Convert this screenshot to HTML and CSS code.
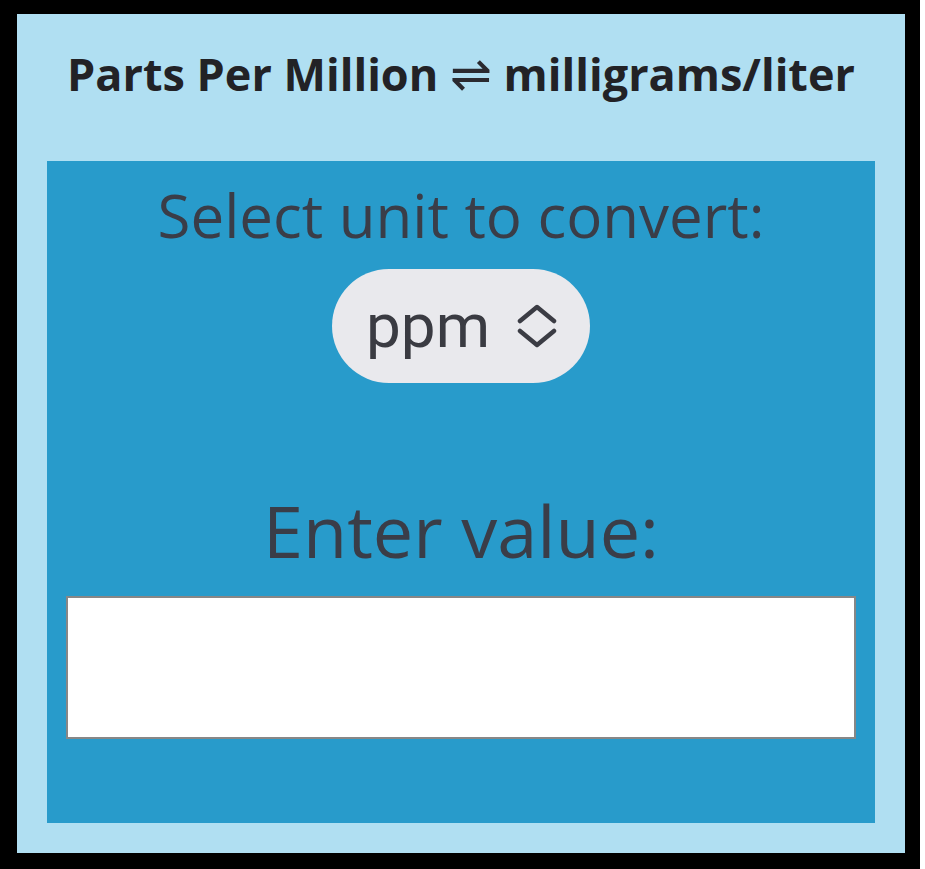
FILE: index.html
```html
<!DOCTYPE html>
<html lang="en">
<head>
    <meta charset="UTF-8">
    <title>PPM to mg/L</title>
    <link rel="stylesheet" href="styles.css">
</head>
<body>
    <div class="frame">
        <div class="panel">
            <h1 class="title">Parts Per Million <span class="arrow">&#8652;</span> milligrams/liter</h1>
            <form class="converter" id="converter">
                <label for="unit" class="label-unit">Select unit to convert:</label>
                <div class="unit-select">
                    <select id="unit" name="unit">
                        <option value="ppm">ppm</option>
                        <option value="mgl">mg/L</option>
                    </select>
                    <svg class="chevrons" width="40" height="44" viewBox="0 0 40 44" aria-hidden="true">
                        <path d="M3 17 L20 3 L37 17 M3 27 L20 41 L37 27" fill="none" stroke="#3b3c44" stroke-width="4.5" stroke-linecap="round" stroke-linejoin="round"/>
                    </svg>
                </div>
                <label for="value" class="label-value">Enter value:</label>
                <input type="text" id="value" name="value">
            </form>
        </div>
    </div>
</body>
</html>
```

FILE: styles.css
```css
body {
    margin: 0;
    padding: 0;
    background-color: #ffffff;
    font-family: "Open Sans", Arial, sans-serif;
}
.frame {
    width: 888px;
    background-color: #000000;
    border-style: solid;
    border-color: #000000;
    border-width: 14px 15px 16px 17px;
}
.panel {
    background-color: #b0dff2;
    padding: 0 30px 30px 30px;
}
.title {
    margin: 0;
    height: 147px;
    padding-top: 30px;
    box-sizing: border-box;
    text-align: center;
    font-size: 45px;
    font-weight: 700;
    line-height: 60px;
    color: #222226;
}
.title .arrow {
    font-family: "DejaVu Sans", sans-serif;
    font-weight: 400;
    font-size: 50px;
    line-height: 40px;
    color: #2a2a30;
}
.converter {
    background-color: #289bcb;
    height: 662px;
    box-sizing: border-box;
    padding: 14px 19px 0 19px;
    display: flex;
    flex-direction: column;
    align-items: center;
}
.label-unit {
    font-size: 60px;
    line-height: 80px;
    color: #3a3d48;
}
.unit-select {
    position: relative;
    margin-top: 14px;
}
.unit-select select {
    appearance: none;
    -webkit-appearance: none;
    width: 258px;
    height: 114px;
    border: none;
    border-radius: 57px;
    background-color: #e9e9ed;
    color: #3a3b42;
    font-family: Roboto, Arial, sans-serif;
    font-size: 62px;
    padding: 0 90px 2px 34px;
    outline: none;
}
.chevrons {
    position: absolute;
    right: 33px;
    top: 35px;
    pointer-events: none;
}
.label-value {
    margin-top: 102px;
    font-size: 72px;
    line-height: 90px;
    color: #3a3d48;
}
.converter input[type="text"] {
    margin-top: 21px;
    width: 100%;
    height: 143px;
    box-sizing: border-box;
    border: 2px solid #878787;
    background-color: #ffffff;
    font-size: 40px;
    padding: 0 12px;
}
```
